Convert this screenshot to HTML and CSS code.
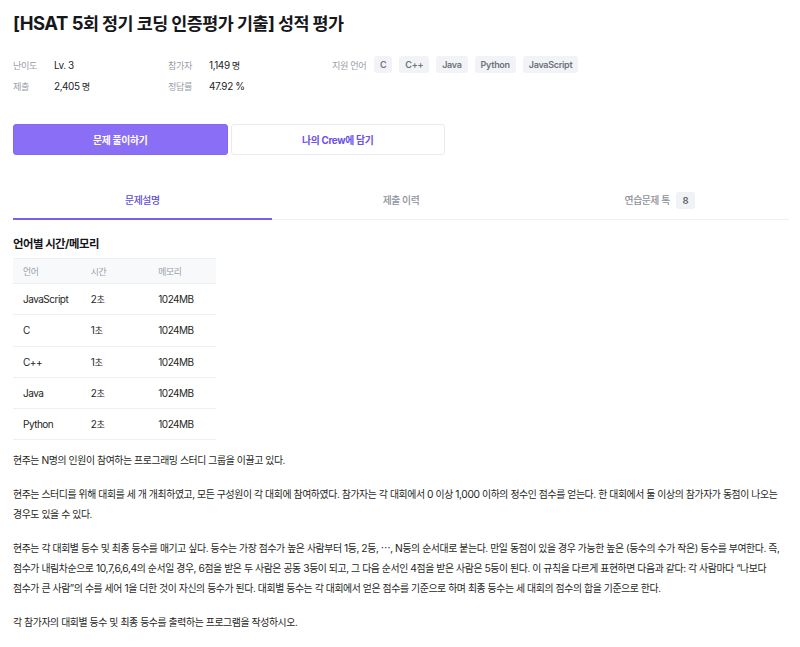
FILE: index.html
```html
<!DOCTYPE html>
<html lang="ko">
<head>
<meta charset="utf-8">
<title>성적 평가</title>
<link rel="stylesheet" href="styles.css">
</head>
<body>
<div class="page">
  <h1 class="title"><span class="en">[HSAT 5</span>회 정기 코딩 인증평가 기출<span class="en">]</span> 성적 평가</h1>

  <div class="meta">
    <div class="meta-item"><span class="label">난이도</span><span class="value"><span class="en">Lv. 3</span></span></div>
    <div class="meta-item"><span class="label">참가자</span><span class="value"><span class="en">1,149</span> 명</span></div>
    <div class="meta-item langs"><span class="label">지원 언어</span>
      <span class="tag">C</span><span class="tag">C++</span><span class="tag">Java</span><span class="tag">Python</span><span class="tag">JavaScript</span>
    </div>
    <div class="meta-item"><span class="label">제출</span><span class="value"><span class="en">2,405</span> 명</span></div>
    <div class="meta-item"><span class="label">정답률</span><span class="value"><span class="en">47.92 %</span></span></div>
  </div>

  <div class="actions">
    <button class="btn btn-primary">문제 풀이하기</button>
    <button class="btn btn-outline">나의 <span class="en">Crew</span>에 담기</button>
  </div>

  <nav class="tabs">
    <div class="tab active">문제설명</div>
    <div class="tab">제출 이력</div>
    <div class="tab">연습문제 톡 <span class="badge">8</span></div>
  </nav>

  <h2 class="section-title">언어별 시간/메모리</h2>
  <table class="limits">
    <thead>
      <tr><th>언어</th><th>시간</th><th>메모리</th></tr>
    </thead>
    <tbody>
      <tr><td class="en-cell">JavaScript</td><td><span class="en">2</span>초</td><td class="en-cell">1024MB</td></tr>
      <tr><td class="en-cell">C</td><td><span class="en">1</span>초</td><td class="en-cell">1024MB</td></tr>
      <tr><td class="en-cell">C++</td><td><span class="en">1</span>초</td><td class="en-cell">1024MB</td></tr>
      <tr><td class="en-cell">Java</td><td><span class="en">2</span>초</td><td class="en-cell">1024MB</td></tr>
      <tr><td class="en-cell">Python</td><td><span class="en">2</span>초</td><td class="en-cell">1024MB</td></tr>
    </tbody>
  </table>

  <div class="desc">
    <p>현주는 <span class="en">N</span>명의 인원이 참여하는 프로그래밍 스터디 그룹을 이끌고 있다.</p>
    <p>현주는 스터디를 위해 대회를 세 개 개최하였고, 모든 구성원이 각 대회에 참여하였다. 참가자는 각 대회에서 <span class="en">0</span> 이상 <span class="en">1,000</span> 이하의 정수인 점수를 얻는다. 한 대회에서 둘 이상의 참가자가 동점이 나오는 경우도 있을 수 있다.</p>
    <p>현주는 각 대회별 등수 및 최종 등수를 매기고 싶다. 등수는 가장 점수가 높은 사람부터 <span class="en">1</span>등, <span class="en">2</span>등, ⋯, <span class="en">N</span>등의 순서대로 붙는다. 만일 동점이 있을 경우 가능한 높은 (등수의 수가 작은) 등수를 부여한다. 즉, 점수가 내림차순으로 <span class="en">10,7,6,6,4</span>의 순서일 경우, <span class="en">6</span>점을 받은 두 사람은 공동 <span class="en">3</span>등이 되고, 그 다음 순서인 <span class="en">4</span>점을 받은 사람은 <span class="en">5</span>등이 된다. 이 규칙을 다르게 표현하면 다음과 같다: 각 사람마다 “나보다 점수가 큰 사람”의 수를 세어 <span class="en">1</span>을 더한 것이 자신의 등수가 된다. 대회별 등수는 각 대회에서 얻은 점수를 기준으로 하며 최종 등수는 세 대회의 점수의 합을 기준으로 한다.</p>
    <p>각 참가자의 대회별 등수 및 최종 등수를 출력하는 프로그램을 작성하시오.</p>
  </div>
</div>
</body>
</html>
```

FILE: styles.css
```css
* { box-sizing: border-box; }

html, body {
  margin: 0;
  padding: 0;
  background: #ffffff;
}

body {
  font-family: Inter, "Noto Sans CJK KR", sans-serif;
  color: #222327;
  font-size: 9.2px;
  letter-spacing: -0.4px;
  word-break: keep-all;
}

.page {
  width: 776px;
  margin-left: 13px;
  padding-top: 10px;
}

.en { font-size: 1.08em; }

.title {
  margin: 0;
  font-size: 17.4px;
  line-height: 26px;
  font-weight: 700;
  letter-spacing: -0.5px;
  color: #16171a;
}

.title .en { font-size: 1.06em; }

.meta {
  display: grid;
  grid-template-columns: 155px 164px 1fr;
  grid-auto-rows: 21px;
  margin-top: 17px;
}

.meta-item {
  display: flex;
  align-items: center;
}

.meta-item.langs { grid-row: span 2; align-self: start; height: 21px; }

.label {
  width: 41px;
  color: #9aa0a9;
}

.langs .label { width: 42px; }

.value { color: #222327; }

.tag {
  display: inline-flex;
  align-items: center;
  height: 17px;
  padding: 0 6px;
  margin-right: 7px;
  border-radius: 3px;
  background: #f2f3f7;
  color: #6d727c;
  font-size: 9px;
  font-weight: 600;
  letter-spacing: -0.3px;
}

.actions {
  display: flex;
  gap: 3px;
  margin-top: 28px;
  width: 432px;
}

.btn {
  flex: 1;
  height: 31px;
  border-radius: 3px;
  font-family: inherit;
  font-size: 9.8px;
  font-weight: 700;
  letter-spacing: -0.3px;
  cursor: pointer;
}

.btn .en { font-size: 1em; }

.btn-primary {
  background: #8a6ef6;
  border: 1px solid #8268f2;
  color: #ffffff;
}

.btn-outline {
  background: #ffffff;
  border: 1px solid #e9eaee;
  color: #6a50e6;
}

.tabs {
  display: flex;
  margin-top: 25px;
  border-bottom: 1px solid #eeeff2;
}

.tab {
  flex: 1;
  display: flex;
  align-items: center;
  justify-content: center;
  gap: 6px;
  height: 40px;
  padding-top: 2px;
  margin-bottom: -1px;
  border-bottom: 2px solid transparent;
  color: #8b9099;
  font-size: 9.8px;
  font-weight: 500;
}

.tab.active {
  color: #5d49dc;
  border-bottom-color: #7c5ff2;
}

.badge {
  display: inline-flex;
  align-items: center;
  justify-content: center;
  width: 19px;
  height: 17px;
  border-radius: 3px;
  background: #f1f2f6;
  color: #5f646d;
  font-size: 9.5px;
  font-weight: 600;
}

.section-title {
  margin: 17px 0 0;
  font-size: 11.4px;
  line-height: 14px;
  font-weight: 700;
  letter-spacing: -0.5px;
  color: #16171a;
}

.limits {
  margin-top: 7px;
  width: 203px;
  border-collapse: collapse;
}

.limits th,
.limits td {
  padding: 0 0 0 10px;
  text-align: left;
  width: 68px;
}

.limits th {
  height: 25px;
  background: #f8f9fb;
  border-top: 1px solid #eeeff2;
  border-bottom: 1px solid #eeeff2;
  color: #9aa0a9;
  font-weight: 400;
  font-size: 8.8px;
}

.limits td {
  height: 31.3px;
  border-bottom: 1px solid #eeeff2;
  color: #1e1f23;
}

.limits .en-cell { font-size: 10px; letter-spacing: -0.5px; }

.desc {
  margin-top: 10px;
}

.desc p {
  margin: 0 0 14px;
  font-size: 9.9px;
  line-height: 20px;
  color: #1e1f23;
}

.desc .en { font-size: 1.04em; }
```
